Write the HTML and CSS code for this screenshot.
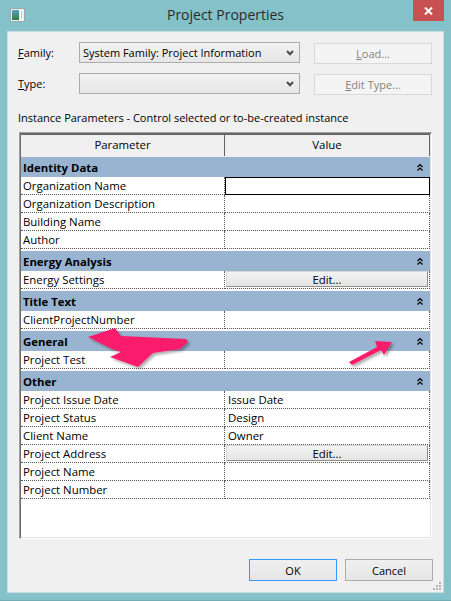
FILE: index.html
```html
<!DOCTYPE html>
<html lang="en">
<head>
  <meta charset="UTF-8" />
  <title>Project Properties</title>
  <link rel="stylesheet" href="styles.css">
</head>
<body>

<div class="window">
  <div class="titlebar">
    <svg class="app-icon" width="15" height="14" viewBox="0 0 15 14">
      <defs>
        <linearGradient id="pic" x1="0" y1="0" x2="0" y2="1">
          <stop offset="0" stop-color="#5d9bd1"/>
          <stop offset="0.6" stop-color="#3f8f6a"/>
          <stop offset="1" stop-color="#2f7a4c"/>
        </linearGradient>
      </defs>
      <rect x="0.5" y="0.5" width="14" height="13" fill="#e8eef0" stroke="#9aa7ab"/>
      <rect x="2" y="2" width="7" height="10" fill="url(#pic)"/>
      <rect x="10" y="2" width="3" height="10" fill="#fff"/>
      <line x1="11.5" y1="3" x2="11.5" y2="11" stroke="#b8c2c6"/>
    </svg>
    <span class="title">Project Properties</span>
    <button class="close-btn">
      <svg width="9" height="8" viewBox="0 0 9 8">
        <path d="M1 0.5 L8 7.5 M8 0.5 L1 7.5" stroke="#fff" stroke-width="2"/>
      </svg>
    </button>
  </div>

  <div class="client">
    <div class="field-row">
      <span class="field-label"><u>F</u>amily:</span>
      <div class="combo">
        <span>System Family: Project Information</span>
        <svg class="combo-arrow" width="8" height="6" viewBox="0 0 8 6"><path d="M1 1 L4 4.2 L7 1" fill="none" stroke="#4a4a4a" stroke-width="2"/></svg>
      </div>
      <button class="side-btn" disabled><u>L</u>oad...</button>
    </div>
    <div class="field-row">
      <span class="field-label"><u>T</u>ype:</span>
      <div class="combo">
        <span></span>
        <svg class="combo-arrow" width="8" height="6" viewBox="0 0 8 6"><path d="M1 1 L4 4.2 L7 1" fill="none" stroke="#4a4a4a" stroke-width="2"/></svg>
      </div>
      <button class="side-btn" disabled><u>E</u>dit Type...</button>
    </div>

    <p class="caption">Instance Parameters - Control selected or to-be-created instance</p>

    <div class="grid">
      <div class="grid-head">
        <div class="head-cell">Parameter</div>
        <div class="head-cell">Value</div>
      </div>

      <div class="group first"><span>Identity Data</span><svg class="collapse" width="6" height="7" viewBox="0 0 6 7"><path d="M0.5 3 L3 0.6 L5.5 3 M0.5 6.5 L3 4.1 L5.5 6.5" fill="none" stroke="#000" stroke-width="1.3"/></svg></div>
      <div class="row"><div class="cell name">Organization Name</div><div class="cell value focused"></div></div>
      <div class="row"><div class="cell name">Organization Description</div><div class="cell value"></div></div>
      <div class="row"><div class="cell name">Building Name</div><div class="cell value"></div></div>
      <div class="row"><div class="cell name">Author</div><div class="cell value"></div></div>

      <div class="group"><span>Energy Analysis</span><svg class="collapse" width="6" height="7" viewBox="0 0 6 7"><path d="M0.5 3 L3 0.6 L5.5 3 M0.5 6.5 L3 4.1 L5.5 6.5" fill="none" stroke="#000" stroke-width="1.3"/></svg></div>
      <div class="row"><div class="cell name">Energy Settings</div><div class="cell value"><button class="cell-btn">Edit...</button></div></div>

      <div class="group"><span>Title Text</span><svg class="collapse" width="6" height="7" viewBox="0 0 6 7"><path d="M0.5 3 L3 0.6 L5.5 3 M0.5 6.5 L3 4.1 L5.5 6.5" fill="none" stroke="#000" stroke-width="1.3"/></svg></div>
      <div class="row"><div class="cell name">ClientProjectNumber</div><div class="cell value"></div></div>

      <div class="group"><span>General</span><svg class="collapse" width="6" height="7" viewBox="0 0 6 7"><path d="M0.5 3 L3 0.6 L5.5 3 M0.5 6.5 L3 4.1 L5.5 6.5" fill="none" stroke="#000" stroke-width="1.3"/></svg></div>
      <div class="row"><div class="cell name">Project Test</div><div class="cell value"></div></div>

      <div class="group"><span>Other</span><svg class="collapse" width="6" height="7" viewBox="0 0 6 7"><path d="M0.5 3 L3 0.6 L5.5 3 M0.5 6.5 L3 4.1 L5.5 6.5" fill="none" stroke="#000" stroke-width="1.3"/></svg></div>
      <div class="row"><div class="cell name">Project Issue Date</div><div class="cell value">Issue Date</div></div>
      <div class="row"><div class="cell name">Project Status</div><div class="cell value">Design</div></div>
      <div class="row"><div class="cell name">Client Name</div><div class="cell value">Owner</div></div>
      <div class="row"><div class="cell name">Project Address</div><div class="cell value"><button class="cell-btn">Edit...</button></div></div>
      <div class="row"><div class="cell name">Project Name</div><div class="cell value"></div></div>
      <div class="row"><div class="cell name">Project Number</div><div class="cell value"></div></div>
    </div>

    <div class="actions">
      <button class="btn default">OK</button>
      <button class="btn">Cancel</button>
    </div>

    <svg class="grip" width="9" height="9" viewBox="0 0 9 9">
      <g fill="#b4b4b4">
        <rect x="6" y="0" width="2" height="2"/>
        <rect x="3" y="3" width="2" height="2"/><rect x="6" y="3" width="2" height="2"/>
        <rect x="0" y="6" width="2" height="2"/><rect x="3" y="6" width="2" height="2"/><rect x="6" y="6" width="2" height="2"/>
      </g>
    </svg>
  </div>
</div>

<!-- callout arrows drawn over the dialog -->
<svg class="marks" width="451" height="601" viewBox="0 0 451 601">
  <defs>
    <filter id="shade" x="-20%" y="-40%" width="140%" height="180%">
      <feDropShadow dx="2" dy="2" stdDeviation="1.5" flood-color="#000" flood-opacity="0.35"/>
    </filter>
  </defs>
  <g fill="#f91e6d" filter="url(#shade)">
    <path d="M88 337 L115 328 L121 336 L186 339 L188 342 L180 349 L153 353 L138 367 L110 357 L121 352 L112 349 Z"/>
    <path d="M349 362 L377 347 L375 341 L392 342 L384 355 L381 350 L352 365 Z"/>
  </g>
</svg>

</body>
</html>
```

FILE: styles.css
```css
body {
  margin: 0;
  background: #84c1c9;
  font-family: "Open Sans", "Noto Sans", sans-serif;
  font-size: 11px;
  color: #000;
}
button {
  font-family: inherit;
  font-size: 11px;
  color: #000;
  padding: 0;
}
.window {
  width: 451px;
  height: 601px;
  box-sizing: border-box;
  border-bottom: 1px solid #73acb4;
}
.titlebar {
  height: 31px;
  display: grid;
  grid-template-columns: 1fr auto 1fr;
  align-items: start;
}
.app-icon {
  margin: 8px 0 0 10px;
}
.title {
  font-size: 14px;
  line-height: 30px;
  color: #2b2b2b;
}
.close-btn {
  justify-self: end;
  width: 31px;
  height: 21px;
  margin-right: 7px;
  border: none;
  background: #c75050;
  display: flex;
  align-items: center;
  justify-content: center;
}
.client {
  position: relative;
  margin: 0 7px;
  height: 562px;
  box-sizing: border-box;
  border: 1px solid #c9dcdf;
  background: #f0f0f0;
  padding: 10px 10px 0 10px;
}
.field-row {
  display: flex;
  align-items: flex-start;
  height: 22px;
  margin-bottom: 9px;
}
.field-label {
  width: 61px;
  line-height: 21px;
}
.combo {
  width: 221px;
  height: 21px;
  box-sizing: border-box;
  border: 1px solid #acacac;
  background: linear-gradient(#f2f2f2, #e6e6e6);
  display: flex;
  align-items: center;
  justify-content: space-between;
  padding: 0 5px 0 3px;
}
.combo-arrow {
  margin-top: 1px;
}
.side-btn {
  width: 118px;
  height: 21px;
  margin: 1px 0 0 14px;
  border: 1px solid #d9d9d9;
  background: #f4f4f4;
  color: #838383;
}
.caption {
  margin: 15px 0 6px 0;
  line-height: 16px;
}
.grid {
  margin-left: 1px;
  width: 413px;
  height: 407px;
  box-sizing: border-box;
  border: 1px solid;
  border-color: #a0a0a0 #ffffff #ffffff #a0a0a0;
  box-shadow: inset 1px 1px 0 #696969, inset -1px -1px 0 #e3e3e3;
  background: #fff;
  padding: 1px;
  font-size: 11.4px;
}
.grid button {
  font-size: 11.4px;
}
.grid-head {
  display: flex;
  height: 23px;
  box-sizing: border-box;
  border-top: 1px solid #646464;
  border-bottom: 1px solid #f0f0f0;
  background: #f0f0f0;
}
.head-cell {
  text-align: center;
  line-height: 20px;
  border-right: 1px solid #646464;
}
.head-cell:first-child {
  width: 203px;
}
.head-cell:last-child {
  width: 204px;
}
.group {
  display: flex;
  align-items: center;
  justify-content: space-between;
  height: 20px;
  margin-top: 2px;
  padding: 0 7px 0 2px;
  background: #99b4d1;
  font-weight: bold;
}
.group.first {
  margin-top: 0;
}
.row {
  display: flex;
  height: 18px;
}
.cell {
  box-sizing: border-box;
  height: 18px;
  line-height: 17px;
  border-right: 1px dotted #5a5a5a;
  border-bottom: 1px dotted #5a5a5a;
  white-space: nowrap;
}
.cell.name {
  width: 204px;
  padding-left: 2px;
}
.cell.value {
  width: 205px;
  padding-left: 3px;
}
.cell.focused {
  border: 1px solid #000;
}
.cell-btn {
  display: block;
  width: 202px;
  height: 16px;
  margin: 0 0 0 -2px;
  border: 1px solid;
  border-color: #d8d8d8 #8e8e8e #8e8e8e #d8d8d8;
  background: linear-gradient(#f3f3f3, #e4e4e4);
  line-height: 13px;
}
.actions {
  display: flex;
  justify-content: flex-end;
  gap: 8px;
  margin-top: 20px;
}
.btn {
  width: 88px;
  height: 22px;
  border: 1px solid #acacac;
  background: linear-gradient(#f0f0f0, #e5e5e5);
}
.btn.default {
  border-color: #3399ff;
}
.grip {
  position: absolute;
  right: 1px;
  bottom: 1px;
}
.marks {
  position: absolute;
  top: 0;
  left: 0;
  pointer-events: none;
}
```
